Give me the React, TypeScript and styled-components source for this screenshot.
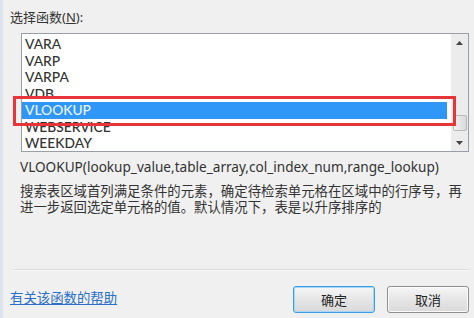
import React from 'react';
import styled, { createGlobalStyle } from 'styled-components';

const GlobalStyle = createGlobalStyle`
  html, body {
    margin: 0;
    padding: 0;
    background: #f0f0f0;
  }
`;

const FONT = `"Noto Sans", "Noto Sans CJK SC", sans-serif`;

const Dialog = styled.div`
  position: relative;
  width: 474px;
  height: 318px;
  box-sizing: border-box;
  overflow: hidden;
  background: #f0f0f0;
  border-left: 3px solid #dde4ec;
  padding: 8px 5px 0 7px;
  font-family: ${FONT};
  color: #2b2b2b;
  display: flex;
  flex-direction: column;
`;

const Label = styled.div`
  font-size: 13px;
  line-height: 18px;
  color: #333;
  & u {
    text-decoration: underline;
  }
`;

const ListBox = styled.div`
  margin: 7px 0 0 11px;
  height: 119px;
  box-sizing: border-box;
  border: 1px solid #9a9ea6;
  background: #fff;
  display: flex;
`;

const Items = styled.div`
  flex: 1;
  padding-top: 2px;
  overflow: hidden;
`;

const Item = styled.div<{ $selected?: boolean }>`
  height: 16.5px;
  line-height: 16.5px;
  padding-left: 3px;
  margin-right: 4px;
  font-family: Lato, "Liberation Sans", sans-serif;
  font-size: 13.8px;
  font-weight: 500;
  color: ${({ $selected }) => ($selected ? '#e8f3ff' : '#333')};
  background: ${({ $selected }) => ($selected ? '#2f97f7' : 'transparent')};
`;

const ScrollBar = styled.div`
  width: 17px;
  background: #ececec;
  display: flex;
  flex-direction: column;
  align-items: center;
`;

const Arrow = styled.div`
  height: 17px;
  width: 17px;
  display: flex;
  align-items: center;
  justify-content: center;
`;

const Track = styled.div`
  flex: 1;
  width: 100%;
  display: flex;
  flex-direction: column;
  justify-content: flex-end;
  align-items: center;
  padding-bottom: 3px;
`;

const Thumb = styled.div`
  width: 14px;
  height: 16px;
  box-sizing: border-box;
  border: 1px solid #b9b9b9;
  border-radius: 2px;
  background: linear-gradient(to right, #f2f2f2, #dadada);
`;

const RedFrame = styled.div`
  position: absolute;
  left: 10px;
  top: 96px;
  width: 443px;
  height: 30px;
  box-sizing: border-box;
  border: 3px solid #e8353a;
`;

const Signature = styled.div`
  margin: 7px 0 0 10px;
  font-size: 13.6px;
  line-height: 16px;
  color: #333;
`;

const Desc = styled.div`
  margin: 7px 0 0 10px;
  font-size: 13.4px;
  line-height: 16px;
  color: #333;
  font-family: "Noto Sans CJK SC", sans-serif;
`;

const Separator = styled.div`
  margin: auto 0 0 3px;
  height: 1px;
  background: #dcdcdc;
  border-bottom: 1px solid #f8f8f8;
`;

const Footer = styled.div`
  display: flex;
  align-items: flex-end;
  justify-content: space-between;
  height: 47px;
  padding-bottom: 5px;
  box-sizing: border-box;
`;

const HelpLink = styled.a`
  margin-bottom: 7px;
  font-size: 13.4px;
  line-height: 18px;
  color: #2a6fc9;
  text-decoration: underline;
  font-family: "Noto Sans CJK SC", sans-serif;
`;

const Buttons = styled.div`
  display: flex;
  gap: 12px;
`;

const Button = styled.button<{ $primary?: boolean }>`
  width: 82px;
  height: 27px;
  border-radius: 3px;
  border: 1px solid ${({ $primary }) => ($primary ? '#3c9ee2' : '#8f8f8f')};
  box-shadow: ${({ $primary }) => ($primary ? 'inset 0 0 0 1px #a8d6f6' : 'inset 0 0 0 1px #fbfbfb')};
  background: linear-gradient(to bottom, #f6f6f6, #e6e6e6 50%, #d9d9d9);
  font-family: "Noto Sans CJK SC", sans-serif;
  font-size: 13px;
  color: #222;
  padding: 0;
`;

const items = ['VARA', 'VARP', 'VARPA', 'VDB', 'VLOOKUP', 'WEBSERVICE', 'WEEKDAY'];

export default function App() {
  return (
    <Dialog>
      <GlobalStyle />
      <Label>
        选择函数(<u>N</u>):
      </Label>
      <ListBox>
        <Items>
          {items.map((it) => (
            <Item key={it} $selected={it === 'VLOOKUP'}>
              {it}
            </Item>
          ))}
        </Items>
        <ScrollBar>
          <Arrow>
            <svg width="7" height="4" viewBox="0 0 7 4">
              <path d="M0 4 L3.5 0 L7 4 Z" fill="#444" />
            </svg>
          </Arrow>
          <Track>
            <Thumb />
          </Track>
          <Arrow>
            <svg width="7" height="4" viewBox="0 0 7 4">
              <path d="M0 0 L7 0 L3.5 4 Z" fill="#444" />
            </svg>
          </Arrow>
        </ScrollBar>
      </ListBox>
      <RedFrame />
      <Signature>VLOOKUP(lookup_value,table_array,col_index_num,range_lookup)</Signature>
      <Desc>
        搜索表区域首列满足条件的元素，确定待检索单元格在区域中的行序号，再
        <br />
        进一步返回选定单元格的值。默认情况下，表是以升序排序的
      </Desc>
      <Separator />
      <Footer>
        <HelpLink href="#" onClick={(e) => e.preventDefault()}>
          有关该函数的帮助
        </HelpLink>
        <Buttons>
          <Button $primary>确定</Button>
          <Button>取消</Button>
        </Buttons>
      </Footer>
    </Dialog>
  );
}
